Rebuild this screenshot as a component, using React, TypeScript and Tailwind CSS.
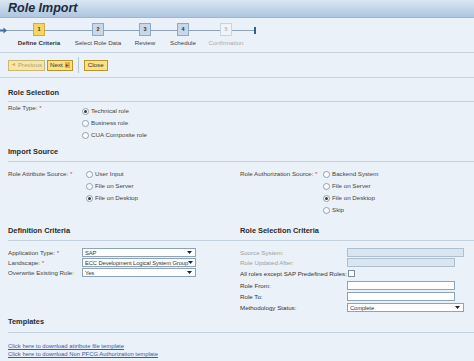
import React from "react";

const STEPS = [
  { n: "1", label: "Define Criteria", w: "w-[50px]", state: "active" },
  { n: "2", label: "Select Role Data", w: "w-[68px]", state: "normal" },
  { n: "3", label: "Review", w: "w-[26px]", state: "normal" },
  { n: "4", label: "Schedule", w: "w-[50px]", state: "normal" },
  { n: "5", label: "Confirmation", w: "w-[36px]", state: "disabled" },
];

function Radio({ label, checked }: { label: string; checked?: boolean }) {
  return (
    <div className="flex items-center h-[12px] gap-[2px]">
      <span className="w-[7px] h-[7px] rounded-full border border-[#8e9fb2] bg-white flex items-center justify-center">
        {checked && <span className="w-[3px] h-[3px] rounded-full bg-[#3a3a3a]" />}
      </span>
      <span>{label}</span>
    </div>
  );
}

function Req() {
  return <span className="text-[#d0464a]"> *</span>;
}

function Select({ value, w }: { value: string; w: string }) {
  return (
    <div className={`${w} h-[9px] bg-white border border-[#8da3b9] flex items-center justify-between pl-[2px] pr-[3px]`}>
      <span className="leading-[8px] text-[5.8px] text-[#333] whitespace-nowrap tracking-[-0.1px]">{value}</span>
      <svg width="5" height="3" viewBox="0 0 5 3" className="shrink-0">
        <path d="M0 0H5L2.5 3Z" fill="#222" />
      </svg>
    </div>
  );
}

function Input({ w, disabled }: { w: string; disabled?: boolean }) {
  return (
    <div
      className={`${w} h-[9px] border ${
        disabled ? "bg-[#d9e5f1] border-[#aebfd0]" : "bg-white border-[#8da3b9]"
      }`}
    />
  );
}

function SectionTitle({ title, pt, pb, className = "" }: { title: string; pt: string; pb: string; className?: string }) {
  return (
    <div className={`${pt} ${pb} border-b border-[#c3d1de] ${className}`}>
      <div className="text-[7.4px] leading-[10px] font-bold text-[#2b2b2b]">{title}</div>
    </div>
  );
}

export default function App() {
  return (
    <div className="w-[474px] h-[361px] overflow-hidden bg-[#eaf1f8] font-['Liberation_Sans',Arial,sans-serif] text-[6.2px] text-[#444]">
      {/* header */}
      <div className="h-[18px] bg-gradient-to-b from-[#dae6f2] to-[#adc6df] border-b border-[#9db6ce] pl-[8px] flex items-center">
        <span className="text-[12.5px] font-bold italic text-[#1c2b3c] leading-none">Role Import</span>
      </div>

      {/* roadmap */}
      <div className="relative h-[35px] border-b border-[#c7d4e0]">
        <div className="absolute left-[5px] top-[12px] w-[250px] h-px bg-[#8ea2b6]" />
        <svg className="absolute left-0 top-[9px]" width="7" height="7" viewBox="0 0 7 7">
          <path d="M0 2.5H3.5V0.5L7 3.5L3.5 6.5V4.5H0Z" fill="#3b6fa6" />
        </svg>
        <div className="absolute left-[254px] top-[9px] w-[2px] h-[7px] bg-[#2d5f91]" />
        <div className="relative flex pl-[14px] pt-[5px]">
          {STEPS.map((s) => (
            <div key={s.n} className={`${s.w} flex flex-col items-center`}>
              <div
                className={`w-[12px] h-[13px] border flex items-center justify-center text-[5.5px] font-bold ${
                  s.state === "active"
                    ? "bg-[#f8d462] border-[#d7a83c] text-[#333]"
                    : s.state === "disabled"
                    ? "bg-[#f0f4f8] border-[#c9d4df] text-[#b5b5b5]"
                    : "bg-[#c8d8e9] border-[#8fa9c4] text-[#333]"
                }`}
              >
                {s.n}
              </div>
              <div
                className={`mt-[3px] whitespace-nowrap leading-[8px] ${
                  s.state === "active"
                    ? "font-bold text-[#333]"
                    : s.state === "disabled"
                    ? "text-[#ababab]"
                    : "text-[#444]"
                }`}
              >
                {s.label}
              </div>
            </div>
          ))}
        </div>
      </div>

      {/* toolbar */}
      <div className="h-[25px] border-b border-[#c7d4e0] pl-[8px] flex items-center gap-[2px]">
        <div className="h-[11px] px-[2px] flex items-center gap-[2px] bg-[#f3e7ad] border border-[#cdb872] text-[#b3a06c]">
          <span className="text-[5px] text-[#e0a13c]">◄</span>
          <span>Previous</span>
        </div>
        <div className="h-[11px] px-[2px] flex items-center gap-[2px] bg-[#f8e284] border border-[#b8952e] text-[#333]">
          <span>Next</span>
          <span className="w-[5px] h-[6px] bg-[#e8ad3c] flex items-center justify-center text-[5px] text-[#b23b12] leading-none">►</span>
        </div>
        <div className="w-px h-[16px] bg-[#b7c7d7] mx-[3px]" />
        <div className="h-[11px] px-[3px] flex items-center bg-[#f8e284] border border-[#b8952e] text-[#333]">
          Close
        </div>
      </div>

      <div className="pl-[8px]">
        {/* Role Selection */}
        <SectionTitle title="Role Selection" pt="pt-[10px]" pb="pb-[3px]" />
        <div className="flex">
          <div className="w-[74px] pt-[1px] leading-[10px]">
            Role Type:<Req />
          </div>
          <div className="pt-[3px]">
            <Radio label="Technical role" checked />
            <Radio label="Business role" />
            <Radio label="CUA Composite role" />
          </div>
        </div>

        {/* Import Source */}
        <SectionTitle title="Import Source" pt="pt-[6px]" pb="pb-[4px]" />
        <div className="grid grid-cols-[232px_1fr] pt-[6px]">
          <div className="flex">
            <div className="w-[78px] leading-[12px]">
              Role Attribute Source:<Req />
            </div>
            <div>
              <Radio label="User Input" />
              <Radio label="File on Server" />
              <Radio label="File on Desktop" checked />
            </div>
          </div>
          <div className="flex">
            <div className="w-[83px] leading-[12px]">
              Role Authorization Source:<Req />
            </div>
            <div>
              <Radio label="Backend System" />
              <Radio label="File on Server" />
              <Radio label="File on Desktop" checked />
              <Radio label="Skip" />
            </div>
          </div>
        </div>

        {/* Definition / Role Selection Criteria */}
        <div className="grid grid-cols-[232px_1fr]">
          <div>
            <SectionTitle title="Definition Criteria" pt="pt-[10px]" pb="pb-[4px]" />
            <div className="pt-[7px]">
              {[
                { l: "Application Type:", r: true, v: "SAP" },
                { l: "Landscape:", r: true, v: "ECC Development Logical System Group" },
                { l: "Overwrite Existing Role:", r: false, v: "Yes" },
              ].map((row) => (
                <div key={row.l} className="flex h-[10px]">
                  <div className="w-[74px] leading-[9px] whitespace-nowrap">
                    {row.l}
                    {row.r && <Req />}
                  </div>
                  <Select value={row.v} w="w-[114px]" />
                </div>
              ))}
            </div>
          </div>
          <div>
            <SectionTitle title="Role Selection Criteria" pt="pt-[10px]" pb="pb-[4px]" />
            <div className="pt-[7px]">
              <div className="flex h-[10px]">
                <div className="w-[107px] leading-[9px] text-[#a0a0a0]">Source System:</div>
                <Input w="w-[117px]" disabled />
              </div>
              <div className="flex h-[10px]">
                <div className="w-[107px] leading-[9px] text-[#a0a0a0]">Role Updated After:</div>
                <Input w="w-[108px]" disabled />
              </div>
              <div className="flex h-[11px] items-center">
                <div className="w-[108px] leading-[9px] whitespace-nowrap text-[#333]">All roles except SAP Predefined Roles:</div>
                <div className="w-[7px] h-[7px] bg-white border border-[#7d8fa3]" />
              </div>
              <div className="flex h-[12px] items-center">
                <div className="w-[107px] leading-[9px] text-[#333]">Role From:</div>
                <Input w="w-[108px]" />
              </div>
              <div className="flex h-[11px] items-center">
                <div className="w-[107px] leading-[9px] text-[#333]">Role To:</div>
                <Input w="w-[108px]" />
              </div>
              <div className="flex h-[11px] items-center">
                <div className="w-[107px] leading-[9px] text-[#333]">Methodology Status:</div>
                <Select value="Complete" w="w-[117px]" />
              </div>
            </div>
          </div>
        </div>

        {/* Templates */}
        <SectionTitle title="Templates" pt="pt-[4px]" pb="pb-[5px]" />
        <div className="pt-[9px] text-[#3a5b9e] text-[5.9px]">
          <div className="leading-[8px] underline">Click here to download attribute file template</div>
          <div className="leading-[8px] underline">Click here to download Non PFCG Authorization template</div>
        </div>
      </div>
    </div>
  );
}
